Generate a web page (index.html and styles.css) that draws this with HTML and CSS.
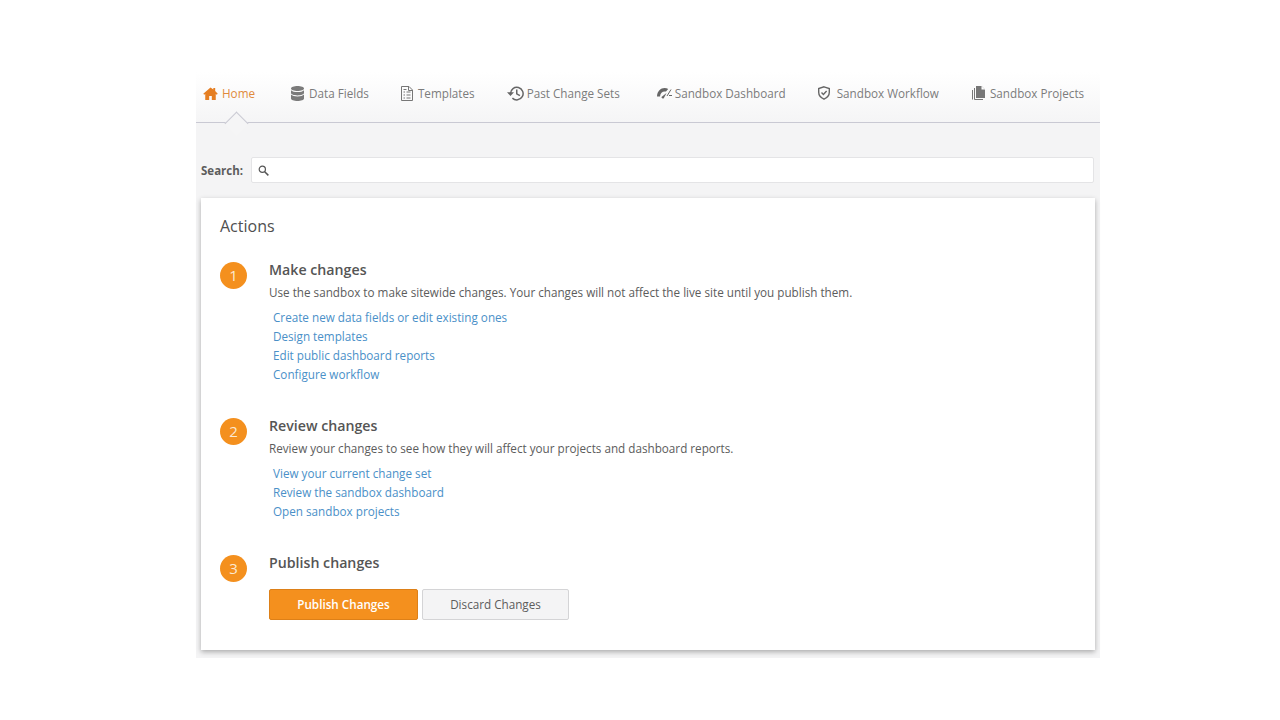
FILE: index.html
```html
<!DOCTYPE html>
<html lang="en">
<head>
<meta charset="utf-8">
<title>Sandbox Home</title>
<link rel="stylesheet" href="styles.css">
</head>
<body>
<div class="app">
  <nav class="nav">
    <a class="tab active t-home"><svg class="ic" viewBox="0 0 16 16"><path fill="#e57e22" d="M8 1.500 0.300 8.300l1 1.100L2.400 8.500V15h4.200v-4.400h2.800V15h4.200V8.500l1.100.9 1-1.100L13 5.400V2.200h-2v1.400z"/></svg>Home</a>
    <a class="tab t-data"><svg class="ic" viewBox="0 0 13 15"><g fill="#7b7b7b"><path d="M0 2.500C0 1 3 0 6.500 0S13 1 13 2.500 10 5 6.500 5 0 4 0 2.500z"/><path d="M0 4.200C1.200 5.500 3.500 6 6.500 6s5.300-.5 6.500-1.800v2.800C13 8.400 10 9.400 6.500 9.400S0 8.400 0 7z"/><path d="M0 8.600c1.200 1.300 3.500 1.800 6.500 1.800s5.300-.5 6.500-1.800v3.900C13 14 10 15 6.500 15S0 14 0 12.500z"/></g></svg>Data Fields</a>
    <a class="tab t-tmpl"><svg class="ic" viewBox="0 0 12 15"><path fill="none" stroke="#777" d="M.5.500h7.500l3.500 3.500v10.500H.5z"/><path fill="none" stroke="#777" d="M7.500.500v4h4M2.500 3.500h3M2.500 6h1.500M5.500 6h4M2.500 9h1.500M5.500 9h4M2.500 12h1.500M5.500 12h4"/></svg>Templates</a>
    <a class="tab t-past"><svg class="ic" viewBox="0 0 17 15"><path fill="none" stroke="#666" stroke-width="1.500" d="M3.500 7.500a6.300 6.300 0 1 1 1.900 4.600"/><path fill="#666" d="M0 6.200h7L3.500 10zM9 3.500h1.500v3.900l2.800 1.700-.8 1.100L9 8.300z"/></svg>Past Change Sets</a>
    <a class="tab t-dash"><svg class="ic" viewBox="0 0 15 12"><path fill="#666" d="M0 9.500C.2 4 3.800 1 7.500 1c1.500 0 2.700.3 3.700 1L9 4.500C5.500 4 3.500 5.500 3 9.500z"/><path fill="#666" d="M4.500 10 9.500 6l-2.700 5.200A1.400 1.400 0 0 1 4.500 10z"/><path fill="none" stroke="#666" d="M14 2.500 10 9M12 8.500h3"/></svg>Sandbox Dashboard</a>
    <a class="tab t-flow"><svg class="ic" viewBox="0 0 12 14"><path fill="none" stroke="#666" stroke-width="1.400" d="M6 .8 11.300 2.600v3.700c0 3.200-2.200 5.500-5.300 6.900C2.900 11.800.7 9.500.7 6.300V2.600z"/><path fill="none" stroke="#666" stroke-width="1.400" d="m3.500 6.500 1.900 1.900L8.600 5"/></svg>Sandbox Workflow</a>
    <a class="tab t-proj"><svg class="ic" viewBox="0 0 13 14"><path fill="#777" d="M4 0h5.500L13 3.500V12H4z"/><path fill="#fff" d="M9.500 0v3.500H13z"/><path fill="none" stroke="#777" d="M2.500 2v11.500H11M.5 4v9.500"/></svg>Sandbox Projects</a>
    <span class="caret"></span>
  </nav>
  <div class="search">
    <label class="search-label">Search:</label>
    <div class="search-box"><svg class="search-ic" viewBox="0 0 12 12"><circle cx="4.700" cy="4.700" r="3.400" fill="none" stroke="#555" stroke-width="1.300"/><path stroke="#555" stroke-width="1.600" d="m7.300 7.300 4 4"/></svg></div>
  </div>
  <main class="card">
    <h1 class="title">Actions</h1>
    <section class="step s1">
      <span class="num">1</span>
      <div class="body">
        <h2>Make changes</h2>
        <p>Use the sandbox to make sitewide changes. Your changes will not affect the live site until you publish them.</p>
        <ul>
          <li><a>Create new data fields or edit existing ones</a></li>
          <li><a>Design templates</a></li>
          <li><a>Edit public dashboard reports</a></li>
          <li><a>Configure workflow</a></li>
        </ul>
      </div>
    </section>
    <section class="step s2">
      <span class="num">2</span>
      <div class="body">
        <h2>Review changes</h2>
        <p>Review your changes to see how they will affect your projects and dashboard reports.</p>
        <ul>
          <li><a>View your current change set</a></li>
          <li><a>Review the sandbox dashboard</a></li>
          <li><a>Open sandbox projects</a></li>
        </ul>
      </div>
    </section>
    <section class="step s3">
      <span class="num">3</span>
      <div class="body">
        <h2>Publish changes</h2>
        <div class="btns">
          <button class="btn primary">Publish Changes</button>
          <button class="btn">Discard Changes</button>
        </div>
      </div>
    </section>
  </main>
</div>
</body>
</html>
```
FILE: styles.css
```css
* { box-sizing: border-box; }
html, body { margin: 0; height: 100%; background: #fff; }
body {
  padding: 72px 180px 0 196px;
  font-family: "Open Sans", "Noto Sans", sans-serif;
  font-size: 11.700px;
  color: #5c5c5c;
}
.app { width: 904px; height: 586px; background: #f4f4f5; }
.nav {
  position: relative;
  display: flex;
  height: 51px;
  align-items: center;
  padding: 0 0 8px 7px;
  background: linear-gradient(#fff, #f5f5f6);
  border-bottom: 1.500px solid #c9c9d3;
}
.tab { display: flex; align-items: center; color: #7c7c7c; font-size: 11.700px; white-space: nowrap; }
.tab.active { color: #e08a3c; }
.ic { height: 15px; flex: none; }
.t-home .ic { width: 15px; height: 15px; margin-right: 4px; }
.t-data { margin-left: 36px; }
.t-data .ic { width: 13px; margin-right: 5px; }
.t-tmpl { margin-left: 32px; }
.t-tmpl .ic { width: 12px; margin-right: 5px; }
.t-past { margin-left: 32px; }
.t-past .ic { width: 17px; margin-right: 3px; }
.t-dash { margin-left: 37px; }
.t-dash .ic { width: 15px; height: 12px; margin-right: 3px; }
.t-flow { margin-left: 32px; }
.t-flow .ic { width: 12px; height: 14px; margin-right: 7px; }
.t-proj { margin-left: 33px; }
.t-proj .ic { width: 13px; height: 14px; margin-right: 5px; }
.caret {
  position: absolute;
  left: 31.500px;
  bottom: -10px;
  width: 17px;
  height: 17px;
  background: #f5f5f6;
  border-top: 1px solid #c9c9d3;
  border-left: 1px solid #c9c9d3;
  transform: rotate(45deg);
}
.search { display: flex; align-items: center; height: 26px; margin: 34px 6px 0 5px; }
.search-label { width: 50px; font-size: 11.500px; font-weight: 700; color: #5c5c5c; }
.search-box {
  flex: 1;
  height: 26px;
  display: flex;
  align-items: center;
  padding-left: 6px;
  background: #fff;
  border: 1px solid #e4e4e6;
  border-radius: 2px;
}
.search-ic { width: 11px; height: 11px; }
.card {
  height: 452px;
  margin: 15px 5px 0 5px;
  padding: 17px 19px 0;
  background: #fff;
  box-shadow: 0 2px 5px rgba(0, 0, 0, .3);
}
.title { margin: 0; font-size: 16px; font-weight: 400; line-height: 22px; color: #4f4f4f; }
.step { display: flex; }
.s1 { margin-top: 23px; }
.s2 { margin-top: 32px; }
.s3 { margin-top: 32px; }
.num {
  flex: none;
  width: 27px;
  height: 27px;
  margin-top: 2px;
  border-radius: 50%;
  background: #f4901e;
  color: #fce9d2;
  font-size: 15px;
  line-height: 27px;
  text-align: center;
}
.body { margin-left: 22px; flex: 1; }
h2 { margin: 0; font-size: 14.200px; font-weight: 600; line-height: 20px; color: #555; }
p { margin: 3px 0 0; font-size: 11.700px; line-height: 18px; color: #5c5c5c; }
ul { list-style: none; margin: 7px 0 0; padding: 0 0 0 4px; }
li { height: 19px; line-height: 19px; font-size: 11.700px; }
li a { color: #4a90c8; }
.btns { display: flex; gap: 4px; margin-top: 16px; }
.btn {
  height: 31px;
  width: 147px;
  padding: 0 0 2px;
  font: 400 11.700px "Open Sans", "Noto Sans", sans-serif;
  color: #5c5c5c;
  background: #f4f4f5;
  border: 1px solid #d4d4d6;
  border-radius: 2px;
}
.btn.primary {
  width: 149px;
  font-weight: 600;
  color: #fff;
  background: #f4901e;
  border-color: #dd8018;
}
```
